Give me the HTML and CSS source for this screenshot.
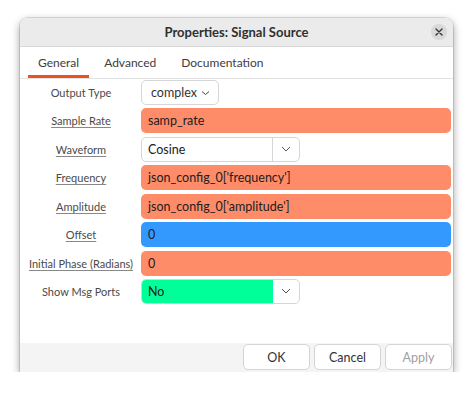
FILE: index.html
```html
<!DOCTYPE html>
<html lang="en">
<head>
    <meta charset="UTF-8">
    <title>Properties: Signal Source</title>
    <link rel="stylesheet" href="styles.css">
</head>
<body>

<div class="window">
    <div class="titlebar">
        <span></span>
        <span class="title">Properties: Signal Source</span>
        <button class="close-btn">
            <svg width="8" height="8" viewBox="0 0 8 8"><path d="M1 1L7 7M7 1L1 7" stroke="#333" stroke-width="1.4" stroke-linecap="round"/></svg>
        </button>
    </div>

    <!-- tabs -->
    <div class="tabs">
        <div class="tab active">General</div>
        <div class="tab">Advanced</div>
        <div class="tab">Documentation</div>
    </div>

    <!-- parameters -->
    <div class="params">
        <div class="label">Output Type</div>
        <div><div class="dropdown">complex <svg width="9" height="6" viewBox="0 0 9 6"><path d="M1 1.5L4.5 4.5L8 1.5" fill="none" stroke="#444" stroke-width="1"/></svg></div></div>

        <div class="label link">Sample Rate</div>
        <div class="field float">samp_rate</div>

        <div class="label link">Waveform</div>
        <div><div class="combo"><span class="combo-text">Cosine</span><span class="combo-arrow"><svg width="10" height="6" viewBox="0 0 10 6"><path d="M1 1L5 5L9 1" fill="none" stroke="#555" stroke-width="1"/></svg></span></div></div>

        <div class="label link">Frequency</div>
        <div class="field float">json_config_0['frequency']</div>

        <div class="label link">Amplitude</div>
        <div class="field float">json_config_0['amplitude']</div>

        <div class="label link">Offset</div>
        <div class="field complex">0</div>

        <div class="label link">Initial Phase (Radians)</div>
        <div class="field float">0</div>

        <div class="label">Show Msg Ports</div>
        <div><div class="combo"><span class="combo-text enum">No</span><span class="combo-arrow"><svg width="10" height="6" viewBox="0 0 10 6"><path d="M1 1L5 5L9 1" fill="none" stroke="#555" stroke-width="1"/></svg></span></div></div>
    </div>

    <!-- buttons -->
    <div class="footer">
        <button class="btn">OK</button>
        <button class="btn">Cancel</button>
        <button class="btn disabled">Apply</button>
    </div>
</div>

</body>
</html>
```

FILE: styles.css
```css
body {
    margin: 0;
    background-color: #ffffff;
    font-family: Lato, "Noto Sans", sans-serif;
    color: #3d3d3d;
}
.window {
    width: 433px;
    height: 354px;
    margin: 18px 0 0 20px;
    background-color: #ffffff;
    border-radius: 8px 8px 0 0;
    box-shadow: 0 3px 9px rgba(0, 0, 0, 0.4), 0 0 0 1px rgba(0, 0, 0, 0.1);
    display: flex;
    flex-direction: column;
    overflow: hidden;
}
.titlebar {
    height: 28px;
    background-color: #ebebeb;
    border-bottom: 1px solid #d8d8d8;
    display: grid;
    grid-template-columns: 1fr auto 1fr;
    align-items: center;
}
.title {
    font-weight: bold;
    font-size: 13px;
    color: #303030;
}
.close-btn {
    justify-self: end;
    margin-right: 6px;
    width: 16px;
    height: 16px;
    border-radius: 50%;
    border: none;
    padding: 0;
    background-color: #d9d9d9;
    display: flex;
    align-items: center;
    justify-content: center;
}
.tabs {
    height: 31px;
    border-bottom: 1px solid #e2e2e2;
    display: flex;
    gap: 5px;
    padding-left: 8px;
}
.tab {
    padding: 0 10px;
    font-size: 12px;
    line-height: 31px;
    color: #3d3d3d;
}
.tab.active {
    box-shadow: inset 0 -3px 0 #e95420;
}
.params {
    flex: 1;
    display: grid;
    grid-template-columns: 106px 1fr;
    grid-auto-rows: 25px;
    column-gap: 7px;
    row-gap: 3.43px;
    padding: 1px 2px 0 8px;
    align-content: start;
}
.label {
    font-size: 11px;
    text-align: center;
    white-space: nowrap;
    line-height: 25px;
    color: #4a4a4a;
}
.label.link {
    text-decoration: underline;
    text-underline-offset: 2px;
    text-decoration-color: #888;
}
.field {
    border-radius: 5px;
    font-size: 12.5px;
    line-height: 25px;
    padding-left: 7px;
    color: #202020;
}
.float {
    background-color: #ff8c69;
}
.complex {
    background-color: #3399ff;
}
.dropdown {
    display: inline-flex;
    align-items: center;
    gap: 4px;
    height: 23px;
    padding: 0 8px 0 9px;
    border: 1px solid #d6d6d6;
    border-radius: 5px;
    font-size: 12.5px;
    color: #333;
}
.combo {
    display: flex;
    width: 157px;
    height: 23px;
    border: 1px solid #d6d6d6;
    border-radius: 5px;
    overflow: hidden;
    font-size: 12.5px;
    color: #202020;
}
.combo-text {
    flex: 1;
    line-height: 23px;
    padding-left: 6px;
    border-right: 1px solid #d6d6d6;
}
.combo-text.enum {
    background-color: #00ff99;
    border-right: none;
    margin: -1px 0 -1px -1px;
    line-height: 25px;
    padding-left: 7px;
}
.combo-arrow {
    width: 26px;
    display: flex;
    align-items: center;
    justify-content: center;
}
.footer {
    height: 29px;
    background-color: #f4f4f4;
    display: flex;
    justify-content: flex-end;
    align-items: center;
    gap: 4px;
    padding-right: 1px;
}
.btn {
    width: 67px;
    height: 26px;
    margin-bottom: 1px;
    background-color: #ffffff;
    border: 1px solid #d4d4d4;
    border-radius: 5px;
    font-family: Lato, "Noto Sans", sans-serif;
    font-size: 12.5px;
    color: #333;
}
.btn.disabled {
    color: #a0a0a0;
}
```
